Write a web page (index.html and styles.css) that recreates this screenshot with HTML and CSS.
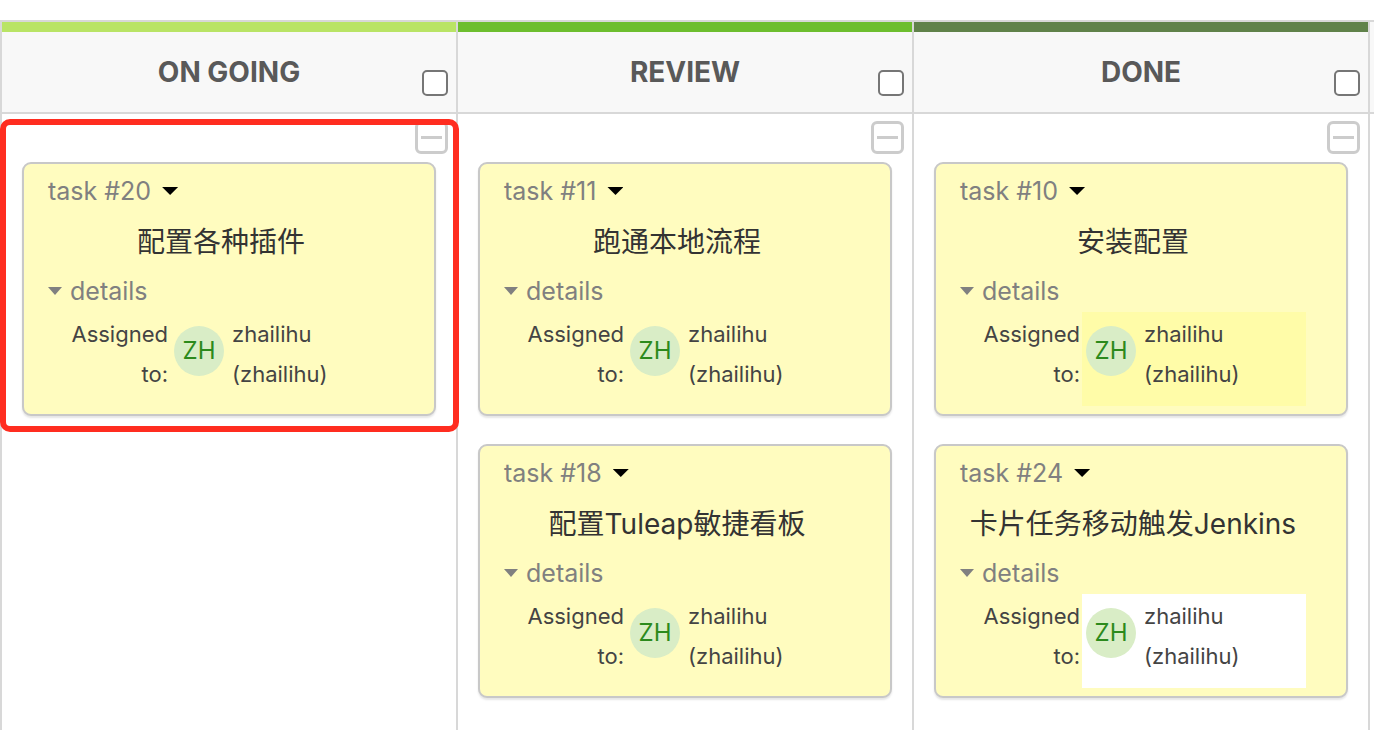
FILE: index.html
```html
<!DOCTYPE html>
<html lang="en">
  <head>
    <meta charset="UTF-8" />
    <meta name="viewport" content="width=device-width, initial-scale=1.0" />
    <title>Cardwall</title>
    <link rel="stylesheet" href="styles.css">
  </head>
  <body>
    <main class="board">
      <section class="column">
        <header class="column-header ongoing">
          <h2>ON GOING</h2>
          <input type="checkbox" aria-label="Fold ON GOING" />
        </header>
        <div class="column-body">
          <button class="collapse" type="button" aria-label="Collapse cards"></button>
          <article class="card">
            <div class="card-top">
              <a href="#20">task #20</a>
              <button class="menu" type="button" aria-label="Task menu"></button>
            </div>
            <h3>配置各种插件</h3>
            <details open>
              <summary>details</summary>
              <div class="field">
                <span class="label">Assigned to:</span>
                <div class="user">
                  <span class="avatar">ZH</span>
                  <span class="name">zhailihu (zhailihu)</span>
                </div>
              </div>
            </details>
          </article>
          <div class="mark"></div>
        </div>
      </section>

      <section class="column">
        <header class="column-header review">
          <h2>REVIEW</h2>
          <input type="checkbox" aria-label="Fold REVIEW" />
        </header>
        <div class="column-body">
          <button class="collapse" type="button" aria-label="Collapse cards"></button>
          <article class="card">
            <div class="card-top">
              <a href="#11">task #11</a>
              <button class="menu" type="button" aria-label="Task menu"></button>
            </div>
            <h3>跑通本地流程</h3>
            <details open>
              <summary>details</summary>
              <div class="field">
                <span class="label">Assigned to:</span>
                <div class="user">
                  <span class="avatar">ZH</span>
                  <span class="name">zhailihu (zhailihu)</span>
                </div>
              </div>
            </details>
          </article>
          <article class="card">
            <div class="card-top">
              <a href="#18">task #18</a>
              <button class="menu" type="button" aria-label="Task menu"></button>
            </div>
            <h3>配置Tuleap敏捷看板</h3>
            <details open>
              <summary>details</summary>
              <div class="field">
                <span class="label">Assigned to:</span>
                <div class="user">
                  <span class="avatar">ZH</span>
                  <span class="name">zhailihu (zhailihu)</span>
                </div>
              </div>
            </details>
          </article>
        </div>
      </section>

      <section class="column">
        <header class="column-header done">
          <h2>DONE</h2>
          <input type="checkbox" aria-label="Fold DONE" />
        </header>
        <div class="column-body">
          <button class="collapse" type="button" aria-label="Collapse cards"></button>
          <article class="card">
            <div class="card-top">
              <a href="#10">task #10</a>
              <button class="menu" type="button" aria-label="Task menu"></button>
            </div>
            <h3>安装配置</h3>
            <details open>
              <summary>details</summary>
              <div class="field">
                <span class="label">Assigned to:</span>
                <div class="user user-fading">
                  <span class="avatar">ZH</span>
                  <span class="name">zhailihu (zhailihu)</span>
                </div>
              </div>
            </details>
          </article>
          <article class="card">
            <div class="card-top">
              <a href="#24">task #24</a>
              <button class="menu" type="button" aria-label="Task menu"></button>
            </div>
            <h3>卡片任务移动触发Jenkins</h3>
            <details open>
              <summary>details</summary>
              <div class="field">
                <span class="label">Assigned to:</span>
                <div class="user user-edited">
                  <span class="avatar">ZH</span>
                  <span class="name">zhailihu (zhailihu)</span>
                </div>
              </div>
            </details>
          </article>
        </div>
      </section>

      <!-- edge of the next column -->
      <div class="column">
        <div class="column-header"></div>
      </div>
    </main>
  </body>
</html>
```
FILE: styles.css
```css
* {
  box-sizing: border-box;
}

body {
  margin: 0;
  padding-top: 20px;
  background-color: #fff;
  color: #444;
  font-family: Inter, "Noto Sans CJK SC", sans-serif;
  font-size: 22px;
}

.board {
  display: grid;
  grid-template-columns: repeat(3, 1fr) 6px;
  min-height: calc(100vh - 20px);
  border-top: 2px solid #d8d8d8;
}

.column {
  border-left: 2px solid #d8d8d8;
}

.column-header {
  display: grid;
  grid-template-columns: 1fr auto 1fr;
  align-items: center;
  height: 92px;
  padding: 0 8px;
  border-top: 10px solid #f8f8f8;
  border-bottom: 2px solid #d8d8d8;
  background-color: #f8f8f8;
}

.ongoing {
  border-top-color: #b9e465;
}

.review {
  border-top-color: #6dbe2e;
}

.done {
  border-top-color: #60824a;
}

.column-header h2 {
  grid-column: 2;
  margin: 0;
  color: #595959;
  font-size: 28px;
  line-height: 40px;
}

.column-header input {
  appearance: none;
  justify-self: end;
  align-self: end;
  width: 26px;
  height: 26px;
  margin: 0 0 16px;
  border: 2px solid #767676;
  border-radius: 5px;
  background-color: #fff;
}

.column-body {
  position: relative;
  display: flex;
  flex-direction: column;
  padding: 7px 20px 0;
}

.collapse {
  display: flex;
  align-items: center;
  justify-content: center;
  align-self: flex-end;
  width: 33px;
  height: 33px;
  margin: 0 -12px 8px 0;
  padding: 0;
  border: 3px solid #ccc;
  border-radius: 6px;
  background: none;
}

.collapse::before {
  content: "";
  width: 21px;
  height: 3px;
  background-color: #ccc;
}

/* cards */
.card {
  padding: 8px 40px 8px 24px;
  border: 2px solid #c8c8c8;
  border-radius: 9px;
  background-color: #fffcbf;
  box-shadow: 0 2px 2px rgba(0, 0, 0, 0.1);
}

.card + .card {
  margin-top: 28px;
}

.card-top {
  display: flex;
  align-items: center;
  gap: 11px;
  height: 38px;
}

.card-top a {
  color: #808080;
  font-size: 25px;
  line-height: 38px;
  text-decoration: none;
}

.menu {
  width: 16px;
  height: 8px;
  padding: 0;
  border: 0;
  background-color: #000;
  clip-path: polygon(0 0, 100% 0, 50% 100%);
}

.card h3 {
  margin: 12px 0 10px;
  color: #333;
  font-size: 28px;
  font-weight: 400;
  line-height: 40px;
  text-align: center;
  white-space: nowrap;
}

summary {
  display: flex;
  align-items: center;
  gap: 8px;
  margin-bottom: 2px;
  color: #808080;
  font-size: 25px;
  line-height: 38px;
  cursor: pointer;
}

summary::before {
  content: "";
  width: 14px;
  height: 8px;
  background-color: #808080;
  clip-path: polygon(0 0, 100% 0, 50% 100%);
}

.field {
  display: grid;
  grid-template-columns: 122px 1fr;
  line-height: 40px;
}

.label {
  padding: 2px 2px 0 0;
  text-align: right;
}

.user {
  display: flex;
  align-items: flex-start;
  gap: 8px;
  padding: 2px 4px 12px;
}

.user-fading {
  background-color: #fffca8;
}

.user-edited {
  background-color: #fff;
}

.avatar {
  flex: none;
  width: 50px;
  height: 50px;
  margin-top: 12px;
  border-radius: 50%;
  background-color: #d9edc6;
  color: #2c8a1c;
  font-size: 24px;
  line-height: 50px;
  text-align: center;
}

/* red frame round the lane */
.mark {
  position: absolute;
  top: 5px;
  right: -3px;
  bottom: -16px;
  left: -2px;
  z-index: 1;
  border: 6px solid #ff2d20;
  border-radius: 10px;
  pointer-events: none;
}
```
